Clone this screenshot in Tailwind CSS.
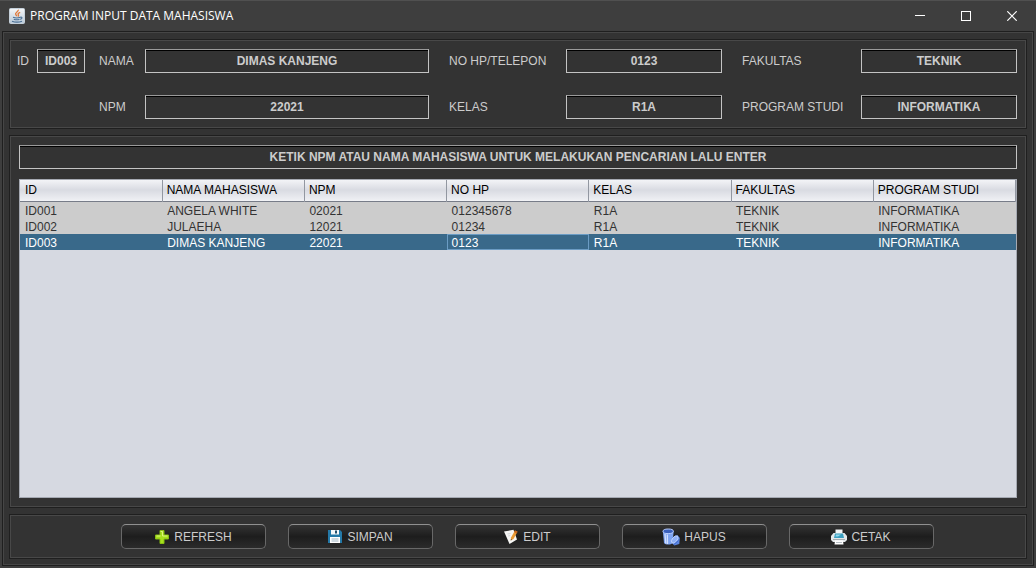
<!DOCTYPE html>
<html lang="id">
<head>
    <meta charset="UTF-8">
    <meta name="viewport" content="width=device-width, initial-scale=1">
    <title>PROGRAM INPUT DATA MAHASISWA</title>
    <script src="https://cdn.jsdelivr.net/npm/@tailwindcss/browser@4"></script>
</head>
<body class="h-screen overflow-hidden flex flex-col bg-[#3e3e3e] text-[#cccccc] text-[12px] leading-4 font-['Liberation_Sans',Arial,sans-serif]">

<!-- Title bar -->
<header class="h-[31px] shrink-0 flex items-center pl-[9px] pr-px border-t border-[#505050] text-white select-none">
    <svg class="w-4 h-4 mr-[5px]" viewBox="0 0 16 16" fill="none">
        <defs>
            <linearGradient id="java-bg" x1="0" y1="0" x2="0" y2="1">
                <stop offset="0" stop-color="#f4f6f8"/>
                <stop offset="1" stop-color="#b9c9d8"/>
            </linearGradient>
        </defs>
        <rect x="0.5" y="0.5" width="15" height="15" rx="1" fill="url(#java-bg)" stroke="#c5d0da"/>
        <path d="M9.300 1.800c.6 1.800-3.800 2.600-2.600 4.600.4.700 1 1.100 1 1.900M11.200 4.300C8.800 5.200 8.800 6 9.400 6.900c.4.600.1 1.100-.5 1.600" stroke="#e0793a" stroke-width="1.300"/>
        <path d="M4 9.300c2 .8 5.500.7 7.300 0M4.800 11.200c1.800.7 4.200.7 5.700 0M3 13.200c2.800 1 7.200 1 10 0M11.300 9.200c2.300-.4 2.200 1.700-.3 2.100" stroke="#4a6f94" stroke-width="1.100"/>
    </svg>
    <h1 class="flex-1 text-[12px] font-['Open_Sans','Segoe_UI',sans-serif]">PROGRAM INPUT DATA MAHASISWA</h1>
    <div class="flex">
        <button type="button" aria-label="Minimize" class="w-[46px] h-[30px] flex items-center justify-center hover:bg-white/10">
            <svg class="w-[10px] h-[10px]" viewBox="0 0 10 10"><path d="M0 4.500h10" stroke="#fff"/></svg>
        </button>
        <button type="button" aria-label="Maximize" class="w-[46px] h-[30px] flex items-center justify-center hover:bg-white/10">
            <svg class="w-[10px] h-[10px]" viewBox="0 0 10 10"><rect x="0.500" y="0.500" width="9" height="9" fill="none" stroke="#fff"/></svg>
        </button>
        <button type="button" aria-label="Close" class="w-[46px] h-[30px] flex items-center justify-center hover:bg-red-600">
            <svg class="w-[10px] h-[10px]" viewBox="0 0 10 10"><path d="M0.300 0.300l9.400 9.400M9.700 0.300L0.300 9.700" stroke="#fff" stroke-width="1.200"/></svg>
        </button>
    </div>
</header>

<main class="flex-1 min-h-0 flex flex-col gap-[6px] mx-[2px] mb-[2px] px-[6px] pt-[7px] pb-[6px] bg-[#333333] border border-[#1f1f1f] shadow-[inset_0_0_0_1px_#464646]">

    <!-- Form -->
    <form class="grid grid-cols-[20px_62px_46px_284fr_20px_117px_156fr_20px_119px_156fr] gap-y-[22px] items-center pl-[7px] pr-[9px] py-[9px] border border-[#1f1f1f] shadow-[inset_0_0_0_1px_#484848]">
        <label for="id">ID</label>
        <input id="id" value="ID003" class="w-12 h-6 text-center font-bold border border-[#c4c4c4] border-t-[#9a9a9a] shadow-[inset_0_1px_0_#000]">
        <label for="nama">NAMA</label>
        <input id="nama" value="DIMAS KANJENG" class="min-w-0 h-6 text-center font-bold border border-[#c4c4c4] border-t-[#9a9a9a] shadow-[inset_0_1px_0_#000]">
        <label for="hp" class="col-start-6">NO HP/TELEPON</label>
        <input id="hp" value="0123" class="min-w-0 h-6 text-center font-bold border border-[#c4c4c4] border-t-[#9a9a9a] shadow-[inset_0_1px_0_#000]">
        <label for="fakultas" class="col-start-9">FAKULTAS</label>
        <input id="fakultas" value="TEKNIK" class="min-w-0 h-6 text-center font-bold border border-[#c4c4c4] border-t-[#9a9a9a] shadow-[inset_0_1px_0_#000]">

        <label for="npm" class="col-start-3">NPM</label>
        <input id="npm" value="22021" class="min-w-0 h-6 text-center font-bold border border-[#c4c4c4] border-t-[#9a9a9a] shadow-[inset_0_1px_0_#000]">
        <label for="kelas" class="col-start-6">KELAS</label>
        <input id="kelas" value="R1A" class="min-w-0 h-6 text-center font-bold border border-[#c4c4c4] border-t-[#9a9a9a] shadow-[inset_0_1px_0_#000]">
        <label for="prodi" class="col-start-9">PROGRAM STUDI</label>
        <input id="prodi" value="INFORMATIKA" class="min-w-0 h-6 text-center font-bold border border-[#c4c4c4] border-t-[#9a9a9a] shadow-[inset_0_1px_0_#000]">
    </form>

    <!-- Search + table -->
    <section class="flex-1 min-h-0 flex flex-col gap-[10px] p-[9px] border border-[#1f1f1f] shadow-[inset_0_0_0_1px_#484848]">
        <input aria-label="Pencarian" value="KETIK NPM ATAU NAMA MAHASISWA UNTUK MELAKUKAN PENCARIAN LALU ENTER" class="w-full h-6 shrink-0 text-center font-bold border border-[#c4c4c4] border-t-[#9a9a9a] shadow-[inset_0_1px_0_#000]">
        <div class="flex-1 min-h-0 overflow-auto bg-[#d6d9e1] border border-[#a5a9b2]">
            <table class="w-full table-fixed text-left text-[#333333] leading-[14px]">
                <thead class="text-black">
                    <tr class="h-[21px] bg-linear-to-b from-[#f3f4f7] via-[#d9dbe2] to-[#eeeff3] border-b border-[#777c88]">
                        <th class="pl-[5px] font-normal border-r border-[#9297a1]">ID</th>
                        <th class="pl-1 font-normal border-r border-[#9297a1]">NAMA MAHASISWA</th>
                        <th class="pl-1 font-normal border-r border-[#9297a1]">NPM</th>
                        <th class="pl-1 font-normal border-r border-[#9297a1]">NO HP</th>
                        <th class="pl-1 font-normal border-r border-[#9297a1]">KELAS</th>
                        <th class="pl-1 font-normal border-r border-[#9297a1]">FAKULTAS</th>
                        <th class="pl-1 font-normal border-r border-[#9297a1]">PROGRAM STUDI</th>
                    </tr>
                </thead>
                <tbody>
                    <tr class="h-4 bg-[#cccccc]">
                        <td class="pl-[5px] pt-[2px]">ID001</td>
                        <td class="pl-[5px] pt-[2px]">ANGELA WHITE</td>
                        <td class="pl-[5px] pt-[2px]">02021</td>
                        <td class="pl-[5px] pt-[2px]">012345678</td>
                        <td class="pl-[5px] pt-[2px]">R1A</td>
                        <td class="pl-[5px] pt-[2px]">TEKNIK</td>
                        <td class="pl-[5px] pt-[2px]">INFORMATIKA</td>
                    </tr>
                    <tr class="h-4 bg-[#cccccc]">
                        <td class="pl-[5px] pt-[2px]">ID002</td>
                        <td class="pl-[5px] pt-[2px]">JULAEHA</td>
                        <td class="pl-[5px] pt-[2px]">12021</td>
                        <td class="pl-[5px] pt-[2px]">01234</td>
                        <td class="pl-[5px] pt-[2px]">R1A</td>
                        <td class="pl-[5px] pt-[2px]">TEKNIK</td>
                        <td class="pl-[5px] pt-[2px]">INFORMATIKA</td>
                    </tr>
                    <tr class="h-4 bg-[#39698a] text-white">
                        <td class="pl-[5px] pt-[2px]">ID003</td>
                        <td class="pl-[5px] pt-[2px]">DIMAS KANJENG</td>
                        <td class="pl-[5px] pt-[2px]">22021</td>
                        <td class="pl-[5px] pt-[2px] shadow-[inset_0_0_0_1px_#6b9cc4]">0123</td>
                        <td class="pl-[5px] pt-[2px]">R1A</td>
                        <td class="pl-[5px] pt-[2px]">TEKNIK</td>
                        <td class="pl-[5px] pt-[2px]">INFORMATIKA</td>
                    </tr>
                </tbody>
            </table>
        </div>
    </section>

    <!-- Buttons -->
    <footer class="flex justify-center gap-[22px] pl-[18px] py-[9px] border border-[#1f1f1f] shadow-[inset_0_0_0_1px_#484848]">
        <button type="button" class="w-[145px] h-[25px] flex items-center justify-center gap-1 rounded-[5px] border border-[#686868] border-t-[#909090] bg-linear-to-b from-[#343434] via-[#1d1d1d] to-[#2b2b2b]">
            <svg class="w-4 h-4" viewBox="0 0 16 16">
                <path d="M6 1.500h4V6h4.500v4H10v4.500H6V10H1.500V6H6z" fill="#a6e01c" stroke="#86bd12" stroke-linejoin="round"/>
                <path d="M6.500 2.500h2V7h5M2.500 7h4" fill="none" stroke="#dcf77c"/>
            </svg>
            REFRESH
        </button>
        <button type="button" class="w-[145px] h-[25px] flex items-center justify-center gap-1 rounded-[5px] border border-[#686868] border-t-[#909090] bg-linear-to-b from-[#343434] via-[#1d1d1d] to-[#2b2b2b]">
            <svg class="w-4 h-4" viewBox="0 0 16 16">
                <path d="M1 1h12l2 2v11H1z" fill="#2479a8"/>
                <path d="M4 1h8v4.500H4z" fill="#f5f8fa"/>
                <path d="M8 1.500h2v3H8z" fill="#214e6b"/>
                <path d="M3 8h10v6H3z" fill="#fff"/>
                <path d="M4.500 10h7M4.500 12h7" stroke="#9fb4c2"/>
            </svg>
            SIMPAN
        </button>
        <button type="button" class="w-[145px] h-[25px] flex items-center justify-center gap-1 rounded-[5px] border border-[#686868] border-t-[#909090] bg-linear-to-b from-[#343434] via-[#1d1d1d] to-[#2b2b2b]">
            <svg class="w-4 h-4" viewBox="0 0 16 16">
                <path d="M1 2.500L10.500.8l3.500 9.700-7.500 4.500z" fill="#f6f6f4"/>
                <path d="M4.500 5l3-.5M5.200 7l2-.4" stroke="#c9ccd0" stroke-width=".8"/>
                <path d="M12 1.500l2.500 1.300-4 7.200-2.700 1.500.2-3z" fill="#e89a35"/>
                <path d="M12 1.500l2.500 1.300-.9 1.700-2.500-1.400z" fill="#c9651d"/>
                <path d="M7.900 10l-.2 1.500 1.300-.7z" fill="#333"/>
            </svg>
            EDIT
        </button>
        <button type="button" class="w-[145px] h-[25px] flex items-center justify-center gap-1 rounded-[5px] border border-[#686868] border-t-[#909090] bg-linear-to-b from-[#343434] via-[#1d1d1d] to-[#2b2b2b]">
            <svg class="w-[18px] h-[18px]" viewBox="0 0 18 18">
                <path d="M.8 3l1.200 12c1.500 2 7 2 8.500 0L11.700 3z" fill="#7da3f0"/>
                <path d="M3 6l.8 9.500M5.300 6.500l.2 9.500" stroke="#d0deff" stroke-width="1.300"/>
                <ellipse cx="6.200" cy="3.300" rx="5.200" ry="2.300" fill="#3a60bd" stroke="#b9ceff"/>
                <path d="M10 9.500l5.500-2.500 2.300 3-.5 6-5 1.500-2.800-3z" fill="#5b86e2"/>
                <ellipse cx="12.700" cy="11.500" rx="2.400" ry="4.300" transform="rotate(40 12.700 11.500)" fill="#8fb0f6" stroke="#c8d9ff" stroke-width=".8"/>
                <path d="M12 16.500l4.500-4" stroke="#3f67c8"/>
            </svg>
            HAPUS
        </button>
        <button type="button" class="w-[145px] h-[25px] flex items-center justify-center gap-1 rounded-[5px] border border-[#686868] border-t-[#909090] bg-linear-to-b from-[#343434] via-[#1d1d1d] to-[#2b2b2b]">
            <svg class="w-4 h-4" viewBox="0 0 16 16">
                <path d="M4.500.5h7V6h-7z" fill="#f4f6f7"/>
                <path d="M2.500 4h11l2.500 3v4l-2 2H2l-2-2V7z" fill="#e4e8ea"/>
                <path d="M4 4.500h8l1 4.500H3z" fill="#3b9fc0"/>
                <path d="M5 5.500h5l-3 2H4.500z" fill="#93d8ec"/>
                <path d="M2 10.500h12" stroke="#a5adb2"/>
                <path d="M4 11.500h8l.5 4h-9z" fill="#fff"/>
                <path d="M5 13.500h6" stroke="#b6bec3"/>
            </svg>
            CETAK
        </button>
    </footer>
</main>

</body>
</html>
